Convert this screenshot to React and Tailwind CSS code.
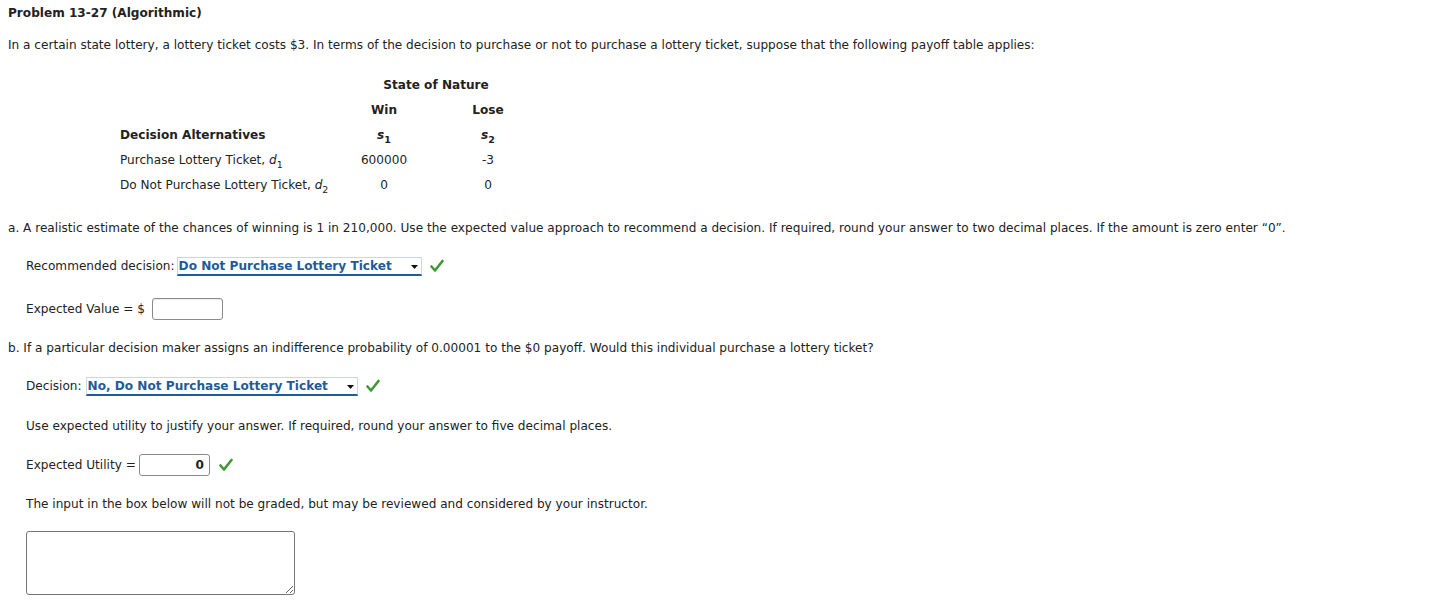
import React from 'react';

const Check = () => (
  <svg width="14" height="14" viewBox="0 0 14 14" className="shrink-0">
    <path d="M1.5 7.5 L5 11.5 L12.5 2" fill="none" stroke="#3d9b35" strokeWidth="2.6" strokeLinecap="round" strokeLinejoin="round" />
  </svg>
);

const Select = ({ width, value }) => (
  <div
    className={`relative flex items-center h-[19px] border border-[#c9d6e3] border-b-2 border-b-[#1f5b99] pl-[1px] pr-[16px] font-bold text-[#1f5b99] whitespace-nowrap ${width}`}
  >
    <span className="leading-[16px]">{value}</span>
    <svg width="7" height="4" viewBox="0 0 7 4" className="absolute right-[3px] top-[7px]">
      <path d="M0 0 L7 0 L3.5 4 Z" fill="#111" />
    </svg>
  </div>
);

const Sub = ({ children }) => <sub className="text-[9.5px] align-[-2px] leading-none">{children}</sub>;

const App = () => {
  return (
    <div className="min-h-screen bg-white text-[#222] text-[12.1px] leading-[16px] px-[8px]" style={{ fontFamily: '"DejaVu Sans", Verdana, sans-serif' }}>
      <div className="pt-[5px] font-bold">Problem 13-27 (Algorithmic)</div>

      <p className="mt-[16px]">
        In a certain state lottery, a lottery ticket costs $3. In terms of the decision to purchase or not to purchase a lottery ticket, suppose that the following payoff table applies:
      </p>

      {/* Payoff table */}
      <div className="mt-[19px] ml-[112px] grid grid-cols-[220px_88px_120px] auto-rows-[25px] items-center whitespace-nowrap">
        <div></div>
        <div className="col-span-2 text-center font-bold pr-[16px]">State of Nature</div>

        <div></div>
        <div className="text-center font-bold">Win</div>
        <div className="text-center font-bold">Lose</div>

        <div className="font-bold">Decision Alternatives</div>
        <div className="text-center font-bold"><i>s</i><Sub>1</Sub></div>
        <div className="text-center font-bold"><i>s</i><Sub>2</Sub></div>

        <div>Purchase Lottery Ticket, <i>d</i><Sub>1</Sub></div>
        <div className="text-center">600000</div>
        <div className="text-center">-3</div>

        <div>Do Not Purchase Lottery Ticket, <i>d</i><Sub>2</Sub></div>
        <div className="text-center">0</div>
        <div className="text-center">0</div>
      </div>

      {/* Part a */}
      <p className="mt-[23px]">
        a. A realistic estimate of the chances of winning is 1 in 210,000. Use the expected value approach to recommend a decision. If required, round your answer to two decimal places. If the amount is zero enter “0”.
      </p>

      <div className="ml-[18px] mt-[19px] flex items-center h-[22px]">
        <span className="mr-[2px]">Recommended decision:</span>
        <Select width="w-[245px]" value="Do Not Purchase Lottery Ticket" />
        <span className="ml-[8px]"><Check /></span>
      </div>

      <div className="ml-[18px] mt-[21px] flex items-center h-[22px]">
        <span className="mr-[7px]">Expected Value = $</span>
        <div className="w-[71px] h-[22px] border border-[#8a8a8a] rounded-[3px] bg-white shadow-[inset_0_1px_1px_rgba(0,0,0,0.08)]"></div>
      </div>

      {/* Part b */}
      <p className="mt-[20px]">
        b. If a particular decision maker assigns an indifference probability of 0.00001 to the $0 payoff. Would this individual purchase a lottery ticket?
      </p>

      <div className="ml-[18px] mt-[19px] flex items-center h-[22px]">
        <span className="mr-[4px]">Decision:</span>
        <Select width="w-[272px]" value="No, Do Not Purchase Lottery Ticket" />
        <span className="ml-[8px]"><Check /></span>
      </div>

      <p className="ml-[18px] mt-[21px]">
        Use expected utility to justify your answer. If required, round your answer to five decimal places.
      </p>

      <div className="ml-[18px] mt-[20px] flex items-center h-[22px]">
        <span className="mr-[3px]">Expected Utility =</span>
        <div className="w-[71px] h-[22px] border border-[#8a8a8a] rounded-[3px] bg-white flex items-center justify-end pr-[5px] font-bold">0</div>
        <span className="ml-[9px]"><Check /></span>
      </div>

      <p className="ml-[18px] mt-[20px]">
        The input in the box below will not be graded, but may be reviewed and considered by your instructor.
      </p>

      <textarea
        className="block ml-[18px] mt-[19px] w-[269px] h-[64px] border border-[#767676] rounded-[3px] bg-white"
        defaultValue=""
      />
    </div>
  );
};

export default App;
